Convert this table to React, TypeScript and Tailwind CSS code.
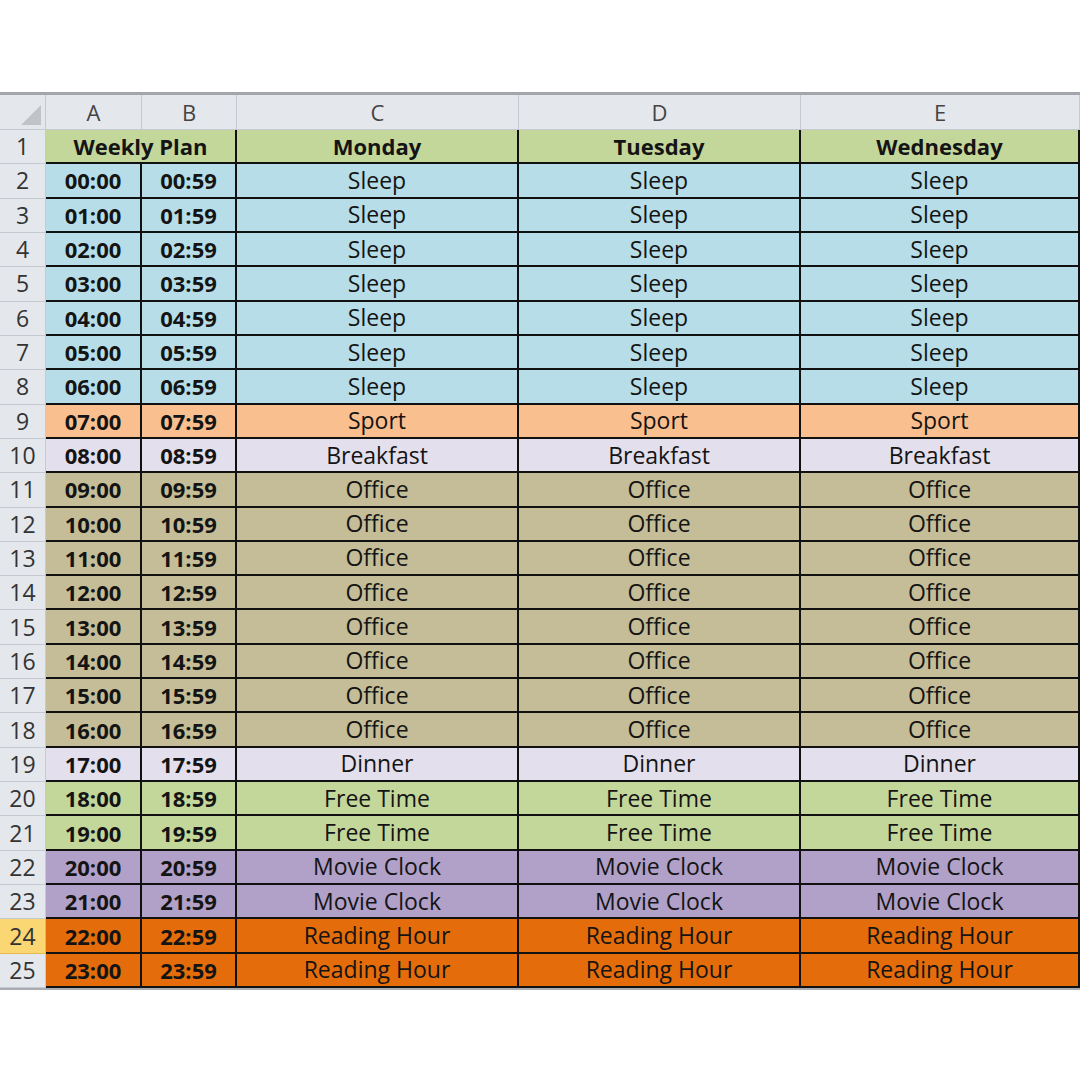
import React from 'react';

type Row = { start: string; end: string; act: string; bg: string };

const colors: Record<string, string> = {
  Sleep: 'bg-[#b7dee8]',
  Sport: 'bg-[#fabf8f]',
  Breakfast: 'bg-[#e4dfec]',
  Office: 'bg-[#c4bd97]',
  Dinner: 'bg-[#e4dfec]',
  'Free Time': 'bg-[#c4d79b]',
  'Movie Clock': 'bg-[#b1a0c7]',
  'Reading Hour': 'bg-[#e46c0a]',
};

const activityFor = (h: number) => {
  if (h <= 6) return 'Sleep';
  if (h === 7) return 'Sport';
  if (h === 8) return 'Breakfast';
  if (h <= 16) return 'Office';
  if (h === 17) return 'Dinner';
  if (h <= 19) return 'Free Time';
  if (h <= 21) return 'Movie Clock';
  return 'Reading Hour';
};

const pad = (n: number) => String(n).padStart(2, '0');

const rows: Row[] = Array.from({ length: 24 }, (_, h) => {
  const act = activityFor(h);
  return { start: `${pad(h)}:00`, end: `${pad(h)}:59`, act, bg: colors[act] };
});

const letters = ['A', 'B', 'C', 'D', 'E'];

const rowHead =
  'flex items-center justify-center border-r border-b border-[#c5c9d0] bg-[#e4e7ec] text-[23px] text-[#333]';
const cell = 'flex items-center justify-center border-r-2 border-b-2 border-[#111] text-[#141414]';

export default function App() {
  return (
    <div className="w-[1080px] h-[1080px] bg-white overflow-hidden font-['Open_Sans',sans-serif]">
      <div className="mt-[92px] border-t-[3px] border-[#a3a6ab]">
        <div className="grid grid-cols-[46px_96px_95px_282px_282px_1fr] grid-rows-[35px_repeat(25,minmax(0,1fr))] h-[893px] leading-none">
          {/* column headers */}
          <div className="relative border-r border-b border-[#c5c9d0] bg-[#e4e7ec]">
            <svg className="absolute right-[4px] bottom-[4px]" width="20" height="20" viewBox="0 0 20 20">
              <polygon points="20,0 20,20 0,20" fill="#c0c3c8" />
            </svg>
          </div>
          {letters.map((l) => (
            <div
              key={l}
              className="flex items-center justify-center border-r border-b border-[#c5c9d0] bg-[#e4e7ec] text-[22px] text-[#444]"
            >
              {l}
            </div>
          ))}

          {/* row 1 */}
          <div className={rowHead}>1</div>
          <div className={`${cell} col-span-2 bg-[#c4d79b] font-bold text-[22px]`}>Weekly Plan</div>
          {['Monday', 'Tuesday', 'Wednesday'].map((d) => (
            <div key={d} className={`${cell} bg-[#c4d79b] font-bold text-[22px]`}>
              {d}
            </div>
          ))}

          {rows.map((r, i) => {
            const n = i + 2;
            const selected = n === 24;
            return (
              <React.Fragment key={r.start}>
                <div
                  className={
                    selected
                      ? 'flex items-center justify-center border-r border-b border-[#e8b84a] bg-[#fbd774] text-[23px] text-[#333]'
                      : rowHead
                  }
                >
                  {n}
                </div>
                <div className={`${cell} ${r.bg} font-bold text-[22px]`}>{r.start}</div>
                <div className={`${cell} ${r.bg} font-bold text-[22px]`}>{r.end}</div>
                {[0, 1, 2].map((k) => (
                  <div key={k} className={`${cell} ${r.bg} text-[23px]`}>
                    {r.act}
                  </div>
                ))}
              </React.Fragment>
            );
          })}
        </div>
        <div className="h-[2px] bg-[#a9adb3]" />
      </div>
    </div>
  );
}
